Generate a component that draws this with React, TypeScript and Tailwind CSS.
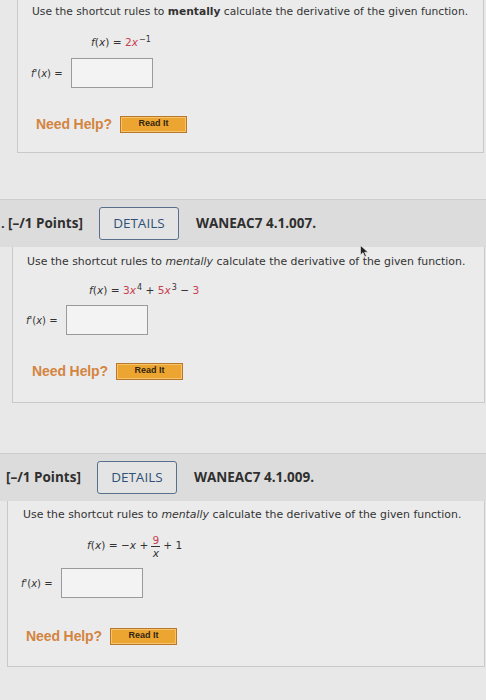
import React from "react";

const Sup = ({ children }: { children: React.ReactNode }) => (
  <sup className="text-[8px] ml-[1px]">{children}</sup>
);

const Red = ({ children }: { children: React.ReactNode }) => (
  <span className="text-[#c8404f]">{children}</span>
);

function NeedHelp({ left }: { left: string }) {
  return (
    <div className={`flex items-center h-[20px] ${left}`}>
      <span className="font-['Liberation_Sans',Arial,sans-serif] font-bold text-[14px] text-[#d3843f] tracking-[-0.1px]">
        Need Help?
      </span>
      <span className="ml-[8px] w-[67px] h-[17px] flex items-center justify-center bg-[#eda532] border border-[#b8772a] shadow-[inset_0_0_0_1px_#f6c36a] font-['Liberation_Sans',Arial,sans-serif] font-bold text-[9px] text-[#33250f]">
        Read It
      </span>
    </div>
  );
}

function Answer() {
  return (
    <div className="flex items-center pl-[13px]">
      <span className="w-[40px] text-[10px] text-[#333]">
        <span className="italic">f'</span>(<span className="italic">x</span>) =
      </span>
      <div className="w-[82px] h-[30px] bg-[#f3f3f3] border border-[#9a9a9a]" />
    </div>
  );
}

function Header({ pl, num, code }: { pl: string; num?: boolean; code: string }) {
  return (
    <div className={`h-[48px] bg-[#dcdcdc] border-t border-[#cdcdcd] flex items-center ${pl} font-['Open_Sans',sans-serif] text-[#2f2f2f]`}>
      {num && <span className="absolute left-[1px] text-[13px] font-bold">.</span>}
      <span className="text-[13.5px] font-bold">[–/1 Points]</span>
      <span className="ml-[16px] w-[80px] h-[33px] flex items-center justify-center border-[1.5px] border-[#56708e] rounded-[3px] bg-[#e4e4e4] text-[13.5px] text-[#2f5077]">
        DETAILS
      </span>
      <span className="ml-[17px] text-[13.5px] font-bold">{code}</span>
    </div>
  );
}

export default function App() {
  const body = "font-['DejaVu_Sans',Verdana,sans-serif] text-[#333]";
  return (
    <div className={`relative w-[486px] h-[700px] overflow-hidden bg-[#e8e8e8] ${body}`}>
      {/* Card 1 */}
      <div className="ml-[17px] mr-[2px] mt-[-2px] h-[155px] border-l border-r border-b border-[#c9c9c9] bg-[#ebebeb] pt-[7px]">
        <div className="pl-[14px] text-[10.7px] leading-[14px] whitespace-nowrap">
          Use the shortcut rules to <span className="font-bold">mentally</span> calculate the derivative of the given function.
        </div>
        <div className="pl-[73px] mt-[16px] text-[10.6px] leading-[14px]">
          <span className="italic">f</span>(<span className="italic">x</span>) = <Red>2<span className="italic">x</span></Red>
          <Sup>−1</Sup>
        </div>
        <div className="mt-[9px]">
          <Answer />
        </div>
        <div className="mt-[26px]">
          <NeedHelp left="pl-[18px]" />
        </div>
      </div>

      <div className="h-[46px]" />
      <div className="relative">
        <Header pl="pl-[8px]" num code="WANEAC7 4.1.007." />
      </div>
      {/* Card 2 */}
      <div className="ml-[12px] mr-[1px] h-[156px] border-l border-r border-b border-[#c9c9c9] bg-[#ebebeb] pt-[8px]">
        <div className="pl-[14px] text-[10.9px] leading-[14px] whitespace-nowrap">
          Use the shortcut rules to <span className="italic">mentally</span> calculate the derivative of the given function.
        </div>
        <div className="pl-[76px] mt-[14px] text-[10.6px] leading-[14px]">
          <span className="italic">f</span>(<span className="italic">x</span>) = <Red>3<span className="italic">x</span></Red>
          <Sup>4</Sup> + <Red>5<span className="italic">x</span></Red>
          <Sup>3</Sup> − <Red>3</Red>
        </div>
        <div className="mt-[8px]">
          <Answer />
        </div>
        <div className="mt-[26px]">
          <NeedHelp left="pl-[19px]" />
        </div>
      </div>

      <div className="h-[50px]" />
      <div className="relative">
        <Header pl="pl-[6px]" code="WANEAC7 4.1.009." />
      </div>
      {/* Card 3 */}
      <div className="ml-[7px] mr-[1px] h-[166px] border-l border-r border-b border-[#c9c9c9] bg-[#ebebeb] pt-[7px]">
        <div className="pl-[15px] text-[10.9px] leading-[14px] whitespace-nowrap">
          Use the shortcut rules to <span className="italic">mentally</span> calculate the derivative of the given function.
        </div>
        <div className="pl-[79px] mt-[11px] text-[10.6px] flex items-center h-[26px]">
          <span>
            <span className="italic">f</span>(<span className="italic">x</span>) = −<span className="italic">x</span> +
          </span>
          <span className="mx-[3px] flex flex-col items-center leading-[12px]">
            <Red>9</Red>
            <span className="w-[9px] border-t border-[#333]" />
            <span className="italic">x</span>
          </span>
          <span>+ 1</span>
        </div>
        <div className="mt-[9px]">
          <Answer />
        </div>
        <div className="mt-[28px]">
          <NeedHelp left="pl-[18px]" />
        </div>
      </div>

      {/* mouse cursor */}
      <svg className="absolute left-[360px] top-[245px]" width="9" height="13" viewBox="0 0 9 13">
        <path d="M0.5 0.5 L0.5 10 L3 7.6 L4.8 11.8 L6.3 11.1 L4.6 7.2 L8 7.2 Z" fill="#222" stroke="#eee" strokeWidth="0.6" />
      </svg>
    </div>
  );
}
